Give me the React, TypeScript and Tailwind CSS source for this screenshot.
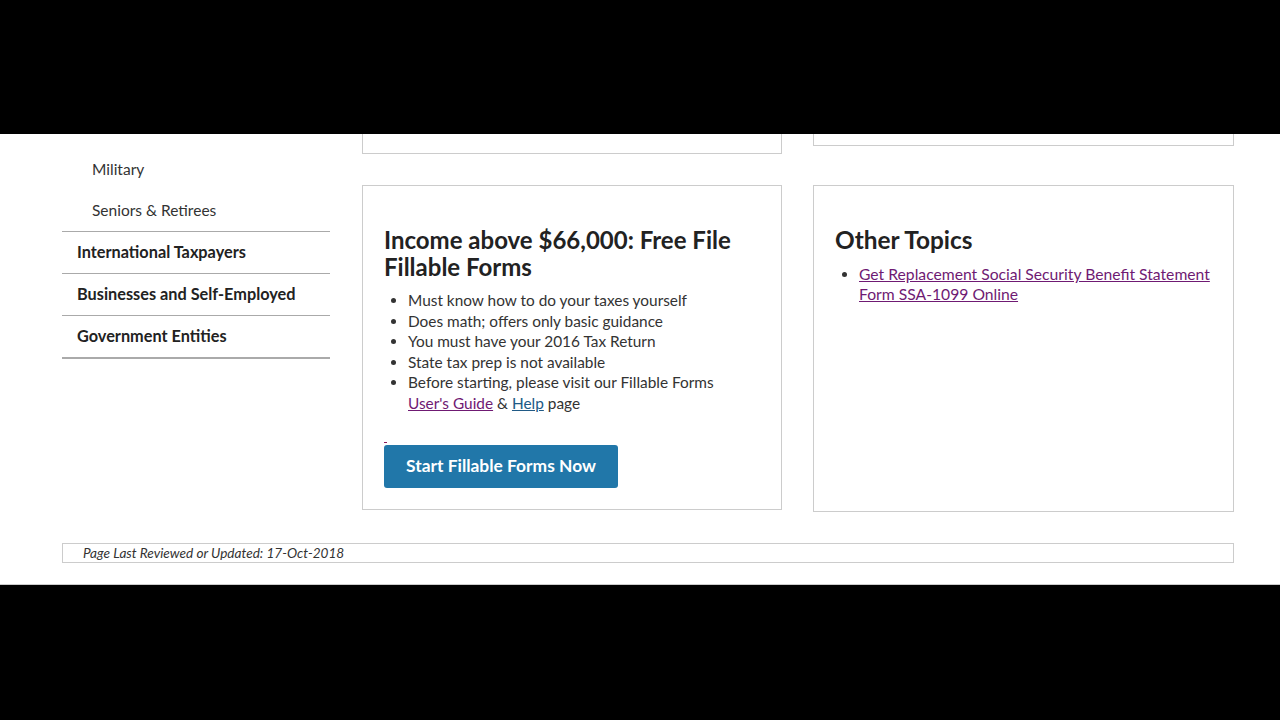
import React from "react";

const font = "font-['Lato','Liberation_Sans',sans-serif]";

const subItems = ["Military", "Seniors & Retirees"];
const mainItems = ["International Taxpayers", "Businesses and Self-Employed", "Government Entities"];

const bullets = [
  "Must know how to do your taxes yourself",
  "Does math; offers only basic guidance",
  "You must have your 2016 Tax Return",
  "State tax prep is not available",
];

const Sidebar = () => (
  <div className="w-[268px] shrink-0 pt-[15px] flex flex-col">
    {subItems.map((item) => (
      <div key={item} className="h-[41px] flex items-center pl-[30px] text-[15.5px] text-[#333]">
        {item}
      </div>
    ))}
    {mainItems.map((item, i) => (
      <div
        key={item}
        className={`h-[42px] flex items-center pl-[15px] border-t border-[#aaa] text-[16.3px] font-bold text-[#222] ${
          i === mainItems.length - 1 ? "border-b-2 h-[44px]" : ""
        }`}
      >
        {item}
      </div>
    ))}
  </div>
);

const App = () => (
  <div className={`w-[1280px] h-[720px] bg-black flex flex-col ${font}`}>
    <div className="h-[134px] shrink-0" />
    <div className="h-[451px] shrink-0 bg-white border-b border-[#ccc] flex flex-col overflow-hidden">
      <div className="flex pl-[62px]">
        <Sidebar />

        <div className="w-[420px] ml-[32px] flex flex-col">
          <div className="h-[20px] border-x border-b border-[#ccc]" />
          <div className="mt-[31px] h-[325px] border border-[#ccc] pl-[21px] pr-[30px] pt-[40px]">
            <h2 className="text-[24px] leading-[27px] font-bold text-[#222]">
              Income above $66,000: Free File Fillable Forms
            </h2>
            <ul className="mt-[10px] pl-[24px] list-disc text-[15.4px] leading-[20.6px] text-[#333]">
              {bullets.map((b) => (
                <li key={b}>{b}</li>
              ))}
              <li>
                Before starting, please visit our Fillable Forms{" "}
                <a href="#" className="text-[#6f1a73] underline">User's Guide</a> &amp;{" "}
                <a href="#" className="text-[#205a86] underline">Help</a> page
              </li>
            </ul>
            <div className="mt-[28px] h-[3px]">
              <span className="block w-[3px] h-[1px] bg-[#8a1a5a]" />
            </div>
            <button className="h-[43px] w-[234px] rounded-[3px] bg-[#2177a9] text-white text-[17.4px] font-bold">
              Start Fillable Forms Now
            </button>
          </div>
        </div>

        <div className="w-[421px] ml-[31px] flex flex-col">
          <div className="h-[12px] border-x border-b border-[#ccc]" />
          <div className="mt-[39px] h-[327px] border border-[#ccc] pl-[21px] pr-[16px] pt-[40px]">
            <h2 className="text-[24.4px] leading-[27px] font-bold text-[#222]">Other Topics</h2>
            <ul className="mt-[11px] pl-[24px] list-disc text-[15.7px] leading-[20.4px] text-[#333]">
              <li>
                <a href="#" className="text-[#6f1a73] underline">
                  Get Replacement Social Security Benefit Statement Form SSA-1099 Online
                </a>
              </li>
            </ul>
          </div>
        </div>
      </div>

      <div className="mt-[31px] ml-[62px] w-[1172px] h-[20px] border border-[#ccc] flex items-center pl-[20px]">
        <span className="text-[13.6px] italic text-[#333]">Page Last Reviewed or Updated: 17-Oct-2018</span>
      </div>
    </div>
  </div>
);

export default App;
